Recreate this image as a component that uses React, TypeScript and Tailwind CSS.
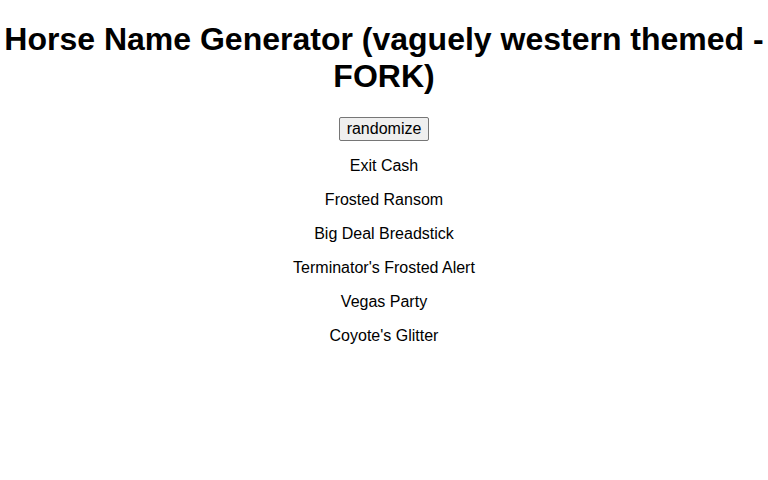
export default function App() {
  const names = [
    "Exit Cash",
    "Frosted Ransom",
    "Big Deal Breadstick",
    "Terminator's Frosted Alert",
    "Vegas Party",
    "Coyote's Glitter",
  ];
  return (
    <div
      className="text-center text-black bg-white min-h-[480px]"
      style={{ fontFamily: '"Liberation Sans", Arial, sans-serif' }}
    >
      <h1 className="text-[32px] leading-[normal] font-bold my-[21.44px]">
        Horse Name Generator (vaguely western themed - FORK)
      </h1>
      <button className="text-[16px] leading-[normal] px-[7px] py-[2px] border border-[#767676] rounded-[2px] bg-[#efefef] text-black">
        randomize
      </button>
      {names.map((n) => (
        <p key={n} className="text-[16px] leading-[normal] my-4">
          {n}
        </p>
      ))}
    </div>
  );
}
